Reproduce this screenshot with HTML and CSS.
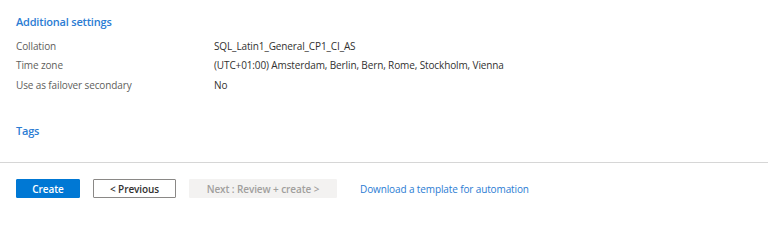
FILE: index.html
```html
<!DOCTYPE html>
<html lang="en">
<head>
<meta charset="utf-8">
<title>Additional settings</title>
<link rel="stylesheet" href="styles.css">
</head>
<body>
<main class="page">
  <section class="section">
    <h2 class="section-title">Additional settings</h2>
    <dl class="props">
      <dt>Collation</dt>
      <dd>SQL_Latin1_General_CP1_CI_AS</dd>
      <dt>Time zone</dt>
      <dd>(UTC+01:00) Amsterdam, Berlin, Bern, Rome, Stockholm, Vienna</dd>
      <dt>Use as failover secondary</dt>
      <dd>No</dd>
    </dl>
  </section>
  <section class="section tags">
    <h2 class="section-title">Tags</h2>
  </section>
</main>
<footer class="footer">
  <button class="btn btn-primary" type="button">Create</button>
  <button class="btn btn-default" type="button">&lt; Previous</button>
  <button class="btn btn-disabled" type="button" disabled>Next : Review + create &gt;</button>
  <a class="link" href="#">Download a template for automation</a>
</footer>
</body>
</html>
```
FILE: styles.css
```css
html, body {
  margin: 0;
  padding: 0;
  background: #ffffff;
}
body {
  font-family: "Open Sans", "Noto Sans", "Liberation Sans", sans-serif;
  font-size: 10px;
  letter-spacing: -0.12px;
  color: #323130;
  width: 768px;
  height: 212px;
  overflow: hidden;
}
.page {
  padding: 14px 16px 0 16px;
}
.section-title {
  margin: 0;
  font-size: 11px;
  line-height: 16px;
  font-weight: 600;
  letter-spacing: -0.2px;
  color: #2b7cd3;
}
.props {
  display: grid;
  grid-template-columns: 198px 1fr;
  grid-auto-rows: 19.5px;
  align-items: center;
  margin: 6px 0 0 0;
}
.props dt {
  color: #605e5c;
  margin: 0;
}
.props dd {
  margin: 0;
  color: #323130;
}
.tags {
  margin-top: 28.5px;
}
.footer {
  margin-top: 23px;
  border-top: 1px solid #d6d6d6;
  padding: 16px 16px 0 16px;
  display: flex;
  align-items: center;
}
.btn {
  height: 19px;
  box-sizing: border-box;
  font-family: inherit;
  font-size: 10px;
  font-weight: 600;
  letter-spacing: -0.1px;
  padding: 0;
  border-radius: 1px;
  margin-right: 13px;
  cursor: pointer;
}
.btn-primary {
  width: 64px;
  background: #0078d4;
  border: 1px solid #0078d4;
  color: #ffffff;
}
.btn-default {
  width: 83px;
  background: #ffffff;
  border: 1px solid #8a8886;
  color: #323130;
}
.btn-disabled {
  width: 148px;
  background: #f3f2f1;
  border: 1px solid #f3f2f1;
  color: #a19f9d;
  margin-right: 23px;
  cursor: default;
}
.link {
  color: #2b7cd3;
  text-decoration: none;
  font-size: 10px;
}
```
